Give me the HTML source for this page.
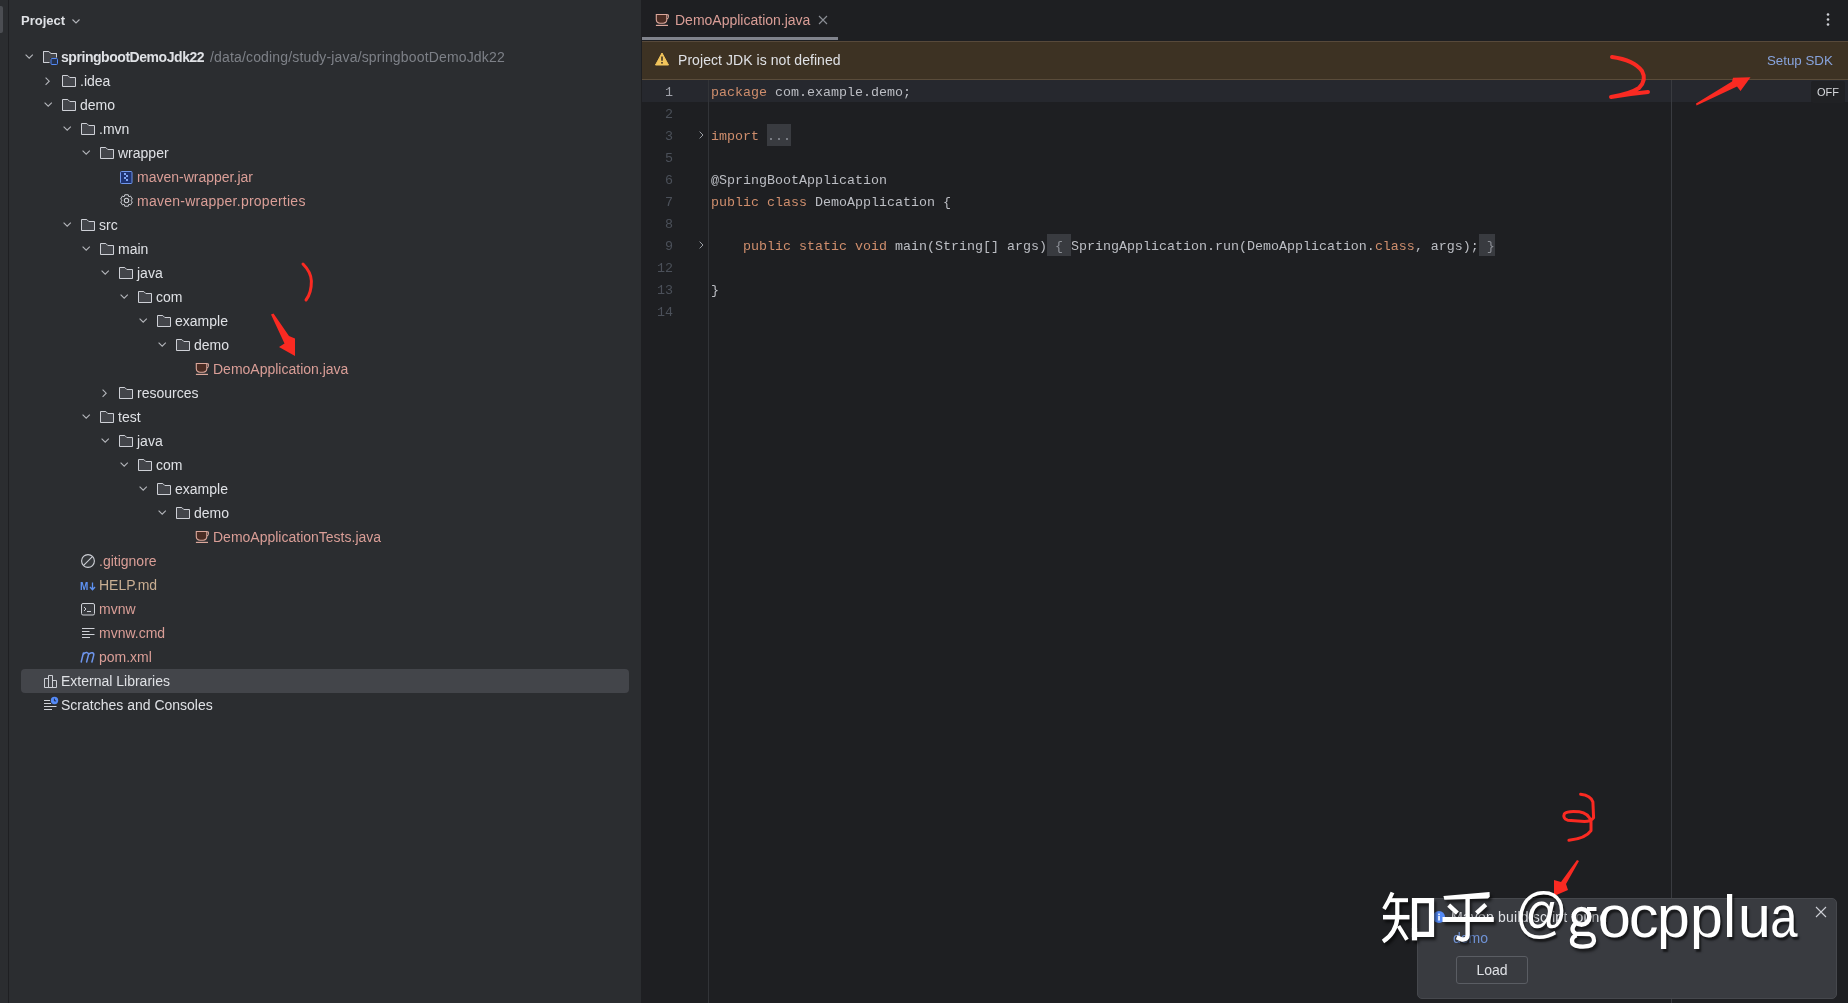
<!DOCTYPE html>
<html><head><meta charset="utf-8">
<style>
*{margin:0;padding:0;box-sizing:border-box}
html,body{width:1848px;height:1003px;overflow:hidden;background:#2b2d30}
body{position:relative;font-family:"Liberation Sans",sans-serif;font-size:14px;color:#dfe1e5;will-change:transform}
.abs{position:absolute}
svg.abs{overflow:visible}
.t{position:absolute;height:24px;line-height:24px;white-space:nowrap}
.code{position:absolute;left:711px;font-family:"Liberation Mono",monospace;font-size:13.333px;height:22px;line-height:22px;white-space:pre;color:#bcbec4}
.kw{color:#cf8e6d}
.ln{position:absolute;left:632px;width:41px;font-family:"Liberation Mono",monospace;font-size:13.333px;height:22px;line-height:22px;color:#4b5059;text-align:right}
.fb{color:#8c8f96}
.red{color:#ff2a1f}
</style></head>
<body>
<div class="abs" style="left:0;top:0;width:8px;height:1003px;background:#2b2d30"></div>
<div class="abs" style="left:0;top:6px;width:3px;height:27px;background:#4b4d52;border-radius:0 2px 2px 0"></div>
<div class="abs" style="left:8px;top:0;width:1px;height:1003px;background:#1e1f22"></div>
<div class="abs" style="left:641px;top:0;width:1px;height:1003px;background:#1e1f22"></div>
<div class="abs" style="left:642px;top:0;width:1206px;height:1003px;background:#1e1f22"></div>
<div class="abs" style="left:21px;top:12px;font-weight:bold;font-size:13px;line-height:18px;color:#dfe1e5">Project</div>
<svg class="abs" style="left:72px;top:19px" width="9" height="6"><path d="M0.5 0.5 L4 4 L7.5 0.5" fill="none" stroke="#b4b6bb" stroke-width="1.1"/></svg>

<div class="abs" style="left:21px;top:669px;width:608px;height:24px;background:#43454a;border-radius:4px"></div>
<svg class="abs" style="left:25px;top:54px" width="9" height="6"><path d="M0.6 0.6 L4.2 4.2 L7.8 0.6" fill="none" stroke="#b4b6bb" stroke-width="1.1"/></svg>
<svg class="abs" style="left:43px;top:51px" width="16" height="14"><path d="M0.5 0.5 H5.8 L7.8 2.5 H13.5 V6 M6 11.5 H0.5 V0.5" fill="#43454a" stroke="#ced0d6" stroke-width="1" stroke-linejoin="round"/><path d="M0.5 0.5 H5.8 L7.8 2.5 H13.5 V7 H7 V11.5 H0.5 Z" fill="#43454a"/><path d="M0.5 0.5 H5.8 L7.8 2.5 H13.5 V6.5 M6.5 11.5 H0.5 V0.5" fill="none" stroke="#ced0d6" stroke-width="1" stroke-linejoin="round"/><rect x="8" y="7.5" width="6.5" height="6" rx="1" fill="#25324d" stroke="#548af7" stroke-width="1"/></svg>
<div class="t" style="left:61px;top:45px;font-weight:bold;letter-spacing:-0.45px;color:#dfe1e5">springbootDemoJdk22</div>
<div class="t" style="left:210px;top:45px;color:#7d8087;letter-spacing:0.16px">/data/coding/study-java/springbootDemoJdk22</div>
<svg class="abs" style="left:45px;top:77px" width="6" height="9"><path d="M0.6 0.6 L4.2 4.2 L0.6 7.8" fill="none" stroke="#b4b6bb" stroke-width="1.1"/></svg>
<svg class="abs" style="left:62px;top:75px" width="14" height="12"><path d="M0.5 0.5 H5.8 L7.8 2.5 H13.5 V11.5 H0.5 Z" fill="#43454a" stroke="#ced0d6" stroke-width="1" stroke-linejoin="round"/></svg>
<div class="t" style="left:80px;top:69px;color:#dfe1e5;letter-spacing:0">.idea</div>
<svg class="abs" style="left:44px;top:102px" width="9" height="6"><path d="M0.6 0.6 L4.2 4.2 L7.8 0.6" fill="none" stroke="#b4b6bb" stroke-width="1.1"/></svg>
<svg class="abs" style="left:62px;top:99px" width="14" height="12"><path d="M0.5 0.5 H5.8 L7.8 2.5 H13.5 V11.5 H0.5 Z" fill="#43454a" stroke="#ced0d6" stroke-width="1" stroke-linejoin="round"/></svg>
<div class="t" style="left:80px;top:93px;color:#dfe1e5;letter-spacing:0">demo</div>
<svg class="abs" style="left:63px;top:126px" width="9" height="6"><path d="M0.6 0.6 L4.2 4.2 L7.8 0.6" fill="none" stroke="#b4b6bb" stroke-width="1.1"/></svg>
<svg class="abs" style="left:81px;top:123px" width="14" height="12"><path d="M0.5 0.5 H5.8 L7.8 2.5 H13.5 V11.5 H0.5 Z" fill="#43454a" stroke="#ced0d6" stroke-width="1" stroke-linejoin="round"/></svg>
<div class="t" style="left:99px;top:117px;color:#dfe1e5;letter-spacing:0">.mvn</div>
<svg class="abs" style="left:82px;top:150px" width="9" height="6"><path d="M0.6 0.6 L4.2 4.2 L7.8 0.6" fill="none" stroke="#b4b6bb" stroke-width="1.1"/></svg>
<svg class="abs" style="left:100px;top:147px" width="14" height="12"><path d="M0.5 0.5 H5.8 L7.8 2.5 H13.5 V11.5 H0.5 Z" fill="#43454a" stroke="#ced0d6" stroke-width="1" stroke-linejoin="round"/></svg>
<div class="t" style="left:118px;top:141px;color:#dfe1e5;letter-spacing:0">wrapper</div>
<svg class="abs" style="left:120px;top:171px" width="13" height="13"><rect x="0.5" y="0.5" width="11.5" height="12" rx="1" fill="#1e3372" stroke="#6e95ec" stroke-width="1"/><rect x="4" y="2" width="2" height="2" fill="#7ea4f4"/><rect x="6" y="4" width="2" height="2" fill="#7ea4f4"/><rect x="4" y="6" width="2" height="2" fill="#7ea4f4"/><rect x="6" y="8" width="2" height="2" fill="#7ea4f4"/></svg>
<div class="t" style="left:137px;top:165px;color:#da9e97;letter-spacing:0">maven-wrapper.jar</div>
<svg class="abs" style="left:120px;top:194px" width="14" height="14"><path d="M4.75 0.76 L8.25 0.76 L8.52 2.37 L9.07 2.69 L10.59 2.11 L12.35 5.15 L11.09 6.18 L11.09 6.82 L12.35 7.85 L10.59 10.89 L9.07 10.31 L8.52 10.63 L8.25 12.24 L4.75 12.24 L4.48 10.63 L3.93 10.31 L2.41 10.89 L0.65 7.85 L1.91 6.82 L1.91 6.18 L0.65 5.15 L2.41 2.11 L3.93 2.69 L4.48 2.37 Z" fill="none" stroke="#ced0d6" stroke-width="1" stroke-linejoin="round"/><circle cx="6.5" cy="6.5" r="2.2" fill="none" stroke="#ced0d6" stroke-width="1.1"/></svg>
<div class="t" style="left:137px;top:189px;color:#da9e97;letter-spacing:0.25px">maven-wrapper.properties</div>
<svg class="abs" style="left:63px;top:222px" width="9" height="6"><path d="M0.6 0.6 L4.2 4.2 L7.8 0.6" fill="none" stroke="#b4b6bb" stroke-width="1.1"/></svg>
<svg class="abs" style="left:81px;top:219px" width="14" height="12"><path d="M0.5 0.5 H5.8 L7.8 2.5 H13.5 V11.5 H0.5 Z" fill="#43454a" stroke="#ced0d6" stroke-width="1" stroke-linejoin="round"/></svg>
<div class="t" style="left:99px;top:213px;color:#dfe1e5;letter-spacing:0">src</div>
<svg class="abs" style="left:82px;top:246px" width="9" height="6"><path d="M0.6 0.6 L4.2 4.2 L7.8 0.6" fill="none" stroke="#b4b6bb" stroke-width="1.1"/></svg>
<svg class="abs" style="left:100px;top:243px" width="14" height="12"><path d="M0.5 0.5 H5.8 L7.8 2.5 H13.5 V11.5 H0.5 Z" fill="#43454a" stroke="#ced0d6" stroke-width="1" stroke-linejoin="round"/></svg>
<div class="t" style="left:118px;top:237px;color:#dfe1e5;letter-spacing:0">main</div>
<svg class="abs" style="left:101px;top:270px" width="9" height="6"><path d="M0.6 0.6 L4.2 4.2 L7.8 0.6" fill="none" stroke="#b4b6bb" stroke-width="1.1"/></svg>
<svg class="abs" style="left:119px;top:267px" width="14" height="12"><path d="M0.5 0.5 H5.8 L7.8 2.5 H13.5 V11.5 H0.5 Z" fill="#43454a" stroke="#ced0d6" stroke-width="1" stroke-linejoin="round"/></svg>
<div class="t" style="left:137px;top:261px;color:#dfe1e5;letter-spacing:0">java</div>
<svg class="abs" style="left:120px;top:294px" width="9" height="6"><path d="M0.6 0.6 L4.2 4.2 L7.8 0.6" fill="none" stroke="#b4b6bb" stroke-width="1.1"/></svg>
<svg class="abs" style="left:138px;top:291px" width="14" height="12"><path d="M0.5 0.5 H5.8 L7.8 2.5 H13.5 V11.5 H0.5 Z" fill="#43454a" stroke="#ced0d6" stroke-width="1" stroke-linejoin="round"/></svg>
<div class="t" style="left:156px;top:285px;color:#dfe1e5;letter-spacing:0">com</div>
<svg class="abs" style="left:139px;top:318px" width="9" height="6"><path d="M0.6 0.6 L4.2 4.2 L7.8 0.6" fill="none" stroke="#b4b6bb" stroke-width="1.1"/></svg>
<svg class="abs" style="left:157px;top:315px" width="14" height="12"><path d="M0.5 0.5 H5.8 L7.8 2.5 H13.5 V11.5 H0.5 Z" fill="#43454a" stroke="#ced0d6" stroke-width="1" stroke-linejoin="round"/></svg>
<div class="t" style="left:175px;top:309px;color:#dfe1e5;letter-spacing:0">example</div>
<svg class="abs" style="left:158px;top:342px" width="9" height="6"><path d="M0.6 0.6 L4.2 4.2 L7.8 0.6" fill="none" stroke="#b4b6bb" stroke-width="1.1"/></svg>
<svg class="abs" style="left:176px;top:339px" width="14" height="12"><path d="M0.5 0.5 H5.8 L7.8 2.5 H13.5 V11.5 H0.5 Z" fill="#43454a" stroke="#ced0d6" stroke-width="1" stroke-linejoin="round"/></svg>
<div class="t" style="left:194px;top:333px;color:#dfe1e5;letter-spacing:0">demo</div>
<svg class="abs" style="left:195px;top:362px" width="15" height="14"><path d="M1.3 1.5 H11.8 V6.6 Q11.8 10.2 8.2 10.2 H4.9 Q1.3 10.2 1.3 6.6 Z" fill="#4a2c23" stroke="#dba79b" stroke-width="1.1"/><path d="M11.8 1.8 H13.4 V4.6 Q13.4 5.8 11.8 5.8" fill="none" stroke="#dba79b" stroke-width="1"/><path d="M0.9 12.4 H13" stroke="#dba79b" stroke-width="1.2"/></svg>
<div class="t" style="left:213px;top:357px;color:#da9e97;letter-spacing:0">DemoApplication.java</div>
<svg class="abs" style="left:102px;top:389px" width="6" height="9"><path d="M0.6 0.6 L4.2 4.2 L0.6 7.8" fill="none" stroke="#b4b6bb" stroke-width="1.1"/></svg>
<svg class="abs" style="left:119px;top:387px" width="14" height="12"><path d="M0.5 0.5 H5.8 L7.8 2.5 H13.5 V11.5 H0.5 Z" fill="#43454a" stroke="#ced0d6" stroke-width="1" stroke-linejoin="round"/></svg>
<div class="t" style="left:137px;top:381px;color:#dfe1e5;letter-spacing:0">resources</div>
<svg class="abs" style="left:82px;top:414px" width="9" height="6"><path d="M0.6 0.6 L4.2 4.2 L7.8 0.6" fill="none" stroke="#b4b6bb" stroke-width="1.1"/></svg>
<svg class="abs" style="left:100px;top:411px" width="14" height="12"><path d="M0.5 0.5 H5.8 L7.8 2.5 H13.5 V11.5 H0.5 Z" fill="#43454a" stroke="#ced0d6" stroke-width="1" stroke-linejoin="round"/></svg>
<div class="t" style="left:118px;top:405px;color:#dfe1e5;letter-spacing:0">test</div>
<svg class="abs" style="left:101px;top:438px" width="9" height="6"><path d="M0.6 0.6 L4.2 4.2 L7.8 0.6" fill="none" stroke="#b4b6bb" stroke-width="1.1"/></svg>
<svg class="abs" style="left:119px;top:435px" width="14" height="12"><path d="M0.5 0.5 H5.8 L7.8 2.5 H13.5 V11.5 H0.5 Z" fill="#43454a" stroke="#ced0d6" stroke-width="1" stroke-linejoin="round"/></svg>
<div class="t" style="left:137px;top:429px;color:#dfe1e5;letter-spacing:0">java</div>
<svg class="abs" style="left:120px;top:462px" width="9" height="6"><path d="M0.6 0.6 L4.2 4.2 L7.8 0.6" fill="none" stroke="#b4b6bb" stroke-width="1.1"/></svg>
<svg class="abs" style="left:138px;top:459px" width="14" height="12"><path d="M0.5 0.5 H5.8 L7.8 2.5 H13.5 V11.5 H0.5 Z" fill="#43454a" stroke="#ced0d6" stroke-width="1" stroke-linejoin="round"/></svg>
<div class="t" style="left:156px;top:453px;color:#dfe1e5;letter-spacing:0">com</div>
<svg class="abs" style="left:139px;top:486px" width="9" height="6"><path d="M0.6 0.6 L4.2 4.2 L7.8 0.6" fill="none" stroke="#b4b6bb" stroke-width="1.1"/></svg>
<svg class="abs" style="left:157px;top:483px" width="14" height="12"><path d="M0.5 0.5 H5.8 L7.8 2.5 H13.5 V11.5 H0.5 Z" fill="#43454a" stroke="#ced0d6" stroke-width="1" stroke-linejoin="round"/></svg>
<div class="t" style="left:175px;top:477px;color:#dfe1e5;letter-spacing:0">example</div>
<svg class="abs" style="left:158px;top:510px" width="9" height="6"><path d="M0.6 0.6 L4.2 4.2 L7.8 0.6" fill="none" stroke="#b4b6bb" stroke-width="1.1"/></svg>
<svg class="abs" style="left:176px;top:507px" width="14" height="12"><path d="M0.5 0.5 H5.8 L7.8 2.5 H13.5 V11.5 H0.5 Z" fill="#43454a" stroke="#ced0d6" stroke-width="1" stroke-linejoin="round"/></svg>
<div class="t" style="left:194px;top:501px;color:#dfe1e5;letter-spacing:0">demo</div>
<svg class="abs" style="left:195px;top:530px" width="15" height="14"><path d="M1.3 1.5 H11.8 V6.6 Q11.8 10.2 8.2 10.2 H4.9 Q1.3 10.2 1.3 6.6 Z" fill="#4a2c23" stroke="#dba79b" stroke-width="1.1"/><path d="M11.8 1.8 H13.4 V4.6 Q13.4 5.8 11.8 5.8" fill="none" stroke="#dba79b" stroke-width="1"/><path d="M0.9 12.4 H13" stroke="#dba79b" stroke-width="1.2"/></svg>
<div class="t" style="left:213px;top:525px;color:#da9e97;letter-spacing:0">DemoApplicationTests.java</div>
<svg class="abs" style="left:81px;top:554px" width="15" height="15"><circle cx="7" cy="7" r="6.4" fill="#43454a" fill-opacity="0.4" stroke="#ced0d6" stroke-width="1.1"/><path d="M2.6 11.4 L11.4 2.6" stroke="#ced0d6" stroke-width="1.1"/></svg>
<div class="t" style="left:99px;top:549px;color:#da9e97;letter-spacing:0">.gitignore</div>
<svg class="abs" style="left:80px;top:582px" width="17" height="9"><text x="0" y="8" font-family="Liberation Sans" font-weight="bold" font-size="10" fill="#5e92f3">M</text><path d="M12.5 0.5 V7.5 M10 5 L12.5 7.8 L15 5" fill="none" stroke="#5e92f3" stroke-width="1.3"/></svg>
<div class="t" style="left:99px;top:573px;color:#c9ae92;letter-spacing:0">HELP.md</div>
<svg class="abs" style="left:81px;top:603px" width="15" height="13"><rect x="0.5" y="0.5" width="13" height="11.5" rx="1.5" fill="#43454a" fill-opacity="0.5" stroke="#ced0d6" stroke-width="1"/><path d="M3 4 L5 6 L3 8" fill="none" stroke="#ced0d6" stroke-width="1"/><path d="M6 8.5 H10" stroke="#ced0d6" stroke-width="1"/></svg>
<div class="t" style="left:99px;top:597px;color:#da9e97;letter-spacing:0">mvnw</div>
<svg class="abs" style="left:82px;top:627px" width="13" height="12"><path d="M0 1.5 H12.5 M0 4.5 H7.5 M0 7.5 H12.5 M0 10.5 H8" stroke="#ced0d6" stroke-width="1"/></svg>
<div class="t" style="left:99px;top:621px;color:#da9e97;letter-spacing:0">mvnw.cmd</div>
<svg class="abs" style="left:80px;top:651px" width="16" height="12"><path d="M1.2 11 L3.4 2 M3.1 3.4 Q5 1.2 7 1.6 Q9 2.2 8.3 4.5 L6.6 11 M8.5 3.6 Q10.4 1.3 12.4 1.7 Q14.3 2.3 13.6 4.6 L11.9 11" fill="none" stroke="#6e95ec" stroke-width="1.5" stroke-linecap="round" stroke-linejoin="round"/></svg>
<div class="t" style="left:99px;top:645px;color:#da9e97;letter-spacing:0">pom.xml</div>
<svg class="abs" style="left:44px;top:675px" width="14" height="13"><path d="M0.5 3.5 H4.5 V12.5 H0.5 Z M4.5 0.5 H8.5 V12.5 H4.5 Z M8.5 5.5 H12.5 V12.5 H8.5 Z" fill="#43454a" fill-opacity="0.4" stroke="#ced0d6" stroke-width="1" stroke-linejoin="round"/></svg>
<div class="t" style="left:61px;top:669px;color:#dfe1e5;letter-spacing:0">External Libraries</div>
<svg class="abs" style="left:44px;top:698px" width="16" height="14"><path d="M0 2.5 H6 M0 5.5 H7 M0 8.5 H12.5 M0 11.5 H8" stroke="#ced0d6" stroke-width="1"/><circle cx="10.5" cy="2.5" r="3.7" fill="#548af7"/><path d="M10.4 0.6 V2.9 H12.1" fill="none" stroke="#1e2a4a" stroke-width="1"/></svg>
<div class="t" style="left:61px;top:693px;color:#dfe1e5;letter-spacing:0">Scratches and Consoles</div>

<svg class="abs" style="left:655px;top:13px" width="14" height="14"><path d="M1.3 1.5 H11.8 V6.6 Q11.8 10.2 8.2 10.2 H4.9 Q1.3 10.2 1.3 6.6 Z" fill="#4a2c23" stroke="#dba79b" stroke-width="1.1"/><path d="M11.8 1.8 H13.4 V4.6 Q13.4 5.8 11.8 5.8" fill="none" stroke="#dba79b" stroke-width="1"/><path d="M0.9 12.4 H13" stroke="#dba79b" stroke-width="1.2"/></svg>
<div class="abs" style="left:675px;top:11px;line-height:18px;color:#da9e97">DemoApplication.java</div>
<svg class="abs" style="left:818px;top:15px" width="10" height="10"><path d="M1 1 L9 9 M9 1 L1 9" stroke="#8c8f96" stroke-width="1.1"/></svg>
<div class="abs" style="left:642px;top:37px;width:196px;height:3px;background:#80838c"></div>
<svg class="abs" style="left:1825px;top:12px" width="6" height="16"><circle cx="3" cy="2.5" r="1.3" fill="#ced0d6"/><circle cx="3" cy="7.5" r="1.3" fill="#ced0d6"/><circle cx="3" cy="12.5" r="1.3" fill="#ced0d6"/></svg>
<div class="abs" style="left:642px;top:41px;width:1206px;height:39px;background:#3d3223;border-top:1px solid #57493a;border-bottom:1px solid #5a4c3a"></div>
<svg class="abs" style="left:655px;top:52px" width="15" height="15"><path d="M7 1 L13.5 13 H0.5 Z" fill="#f2c55c" stroke="#f2c55c" stroke-width="1" stroke-linejoin="round"/><path d="M7 4.5 V8.8" stroke="#3d3223" stroke-width="1.6"/><rect x="6.2" y="10" width="1.6" height="1.6" fill="#3d3223"/></svg>
<div class="abs" style="left:678px;top:51px;line-height:18px;letter-spacing:0.06px;color:#dfe1e5">Project JDK is not defined</div>
<div class="abs" style="left:1767px;top:52px;line-height:18px;font-size:13.3px;color:#87a3dc">Setup SDK</div>
<div class="abs" style="left:642px;top:80px;width:1206px;height:22px;background:#26282e"></div>
<div class="abs" style="left:708px;top:80px;width:1px;height:923px;background:#323438"></div>
<div class="abs" style="left:1671px;top:80px;width:1px;height:923px;background:#393b40"></div>
<div class="abs" style="left:1811px;top:81px;width:34px;height:22px;background:#202124;border-radius:2px;font-size:11px;line-height:23px;text-align:center;color:#d6d8dc">OFF</div>

<div class="abs" style="left:767px;top:124px;width:24px;height:22px;background:#393b40"></div>
<div class="abs" style="left:1047px;top:234px;width:24px;height:22px;background:#393b40"></div>
<div class="abs" style="left:1479px;top:234px;width:16px;height:22px;background:#393b40"></div>
<div class="ln" style="top:82px;color:#a1a3ab">1</div>
<div class="code" style="top:82px"><span class="kw">package</span> com.example.demo;</div>
<div class="ln" style="top:104px;color:#4b5059">2</div>
<div class="ln" style="top:126px;color:#4b5059">3</div>
<div class="code" style="top:126px"><span class="kw">import</span> <span class="fb">...</span></div>
<div class="ln" style="top:148px;color:#4b5059">5</div>
<div class="ln" style="top:170px;color:#4b5059">6</div>
<div class="code" style="top:170px">@SpringBootApplication</div>
<div class="ln" style="top:192px;color:#4b5059">7</div>
<div class="code" style="top:192px"><span class="kw">public class</span> DemoApplication {</div>
<div class="ln" style="top:214px;color:#4b5059">8</div>
<div class="ln" style="top:236px;color:#4b5059">9</div>
<div class="code" style="top:236px">    <span class="kw">public static void</span> main(String[] args)<span class="fb"> { </span>SpringApplication.run(DemoApplication.<span class="kw">class</span>, args);<span class="fb"> }</span></div>
<div class="ln" style="top:258px;color:#4b5059">12</div>
<div class="ln" style="top:280px;color:#4b5059">13</div>
<div class="code" style="top:280px">}</div>
<div class="ln" style="top:302px;color:#4b5059">14</div>
<svg class="abs" style="left:699px;top:131px" width="6" height="9"><path d="M0.6 0.6 L4 4 L0.6 7.4" fill="none" stroke="#9a9da3" stroke-width="1"/></svg>
<svg class="abs" style="left:699px;top:241px" width="6" height="9"><path d="M0.6 0.6 L4 4 L0.6 7.4" fill="none" stroke="#9a9da3" stroke-width="1"/></svg>

<div class="abs" style="left:1417px;top:898px;width:420px;height:101px;background:#393b40;border:1px solid #46484d;border-radius:5px"></div>
<svg class="abs" style="left:1433px;top:911px" width="13" height="13"><circle cx="6" cy="6" r="6" fill="#548af7"/><rect x="5.2" y="5" width="1.6" height="4.5" fill="#fff"/><rect x="5.2" y="2.6" width="1.6" height="1.6" fill="#fff"/></svg>
<div class="abs" style="left:1451px;top:908px;line-height:18px;font-size:14px;letter-spacing:0.2px;color:#dfe1e5">Maven build script found</div>
<div class="abs" style="left:1453px;top:929px;line-height:18px;color:#7093d6">demo</div>
<div class="abs" style="left:1456px;top:956px;width:72px;height:28px;border:1px solid #5a5d63;border-radius:3px;text-align:center;line-height:26px;color:#dfe1e5">Load</div>
<svg class="abs" style="left:1815px;top:906px" width="12" height="12"><path d="M1 1 L11 11 M11 1 L1 11" stroke="#ced0d6" stroke-width="1.1"/></svg>


<svg class="abs" style="left:0;top:0" width="1848" height="1003">
<g fill="none" stroke="#fa2a22" stroke-linecap="round" stroke-linejoin="round">
<path d="M303 264 Q311 272 311.4 281 Q311.5 293 306 300" stroke-width="3"/>
<path d="M1612 57 Q1634 60 1642 71 Q1647 80 1639 88 Q1630 94 1611 97 Q1628 94 1648 92" stroke-width="4"/>
<path d="M1580.6 794.3 Q1591 795.6 1592.9 802 L1593.6 817.6 Q1591 821.5 1584.5 821.5 L1567.6 820.2 Q1562.4 818.3 1564.4 813.7 Q1567.6 810.5 1579.3 811.8 Q1588.4 813 1591 821.5 L1591 830.6 Q1585.8 838.4 1568.9 840.3" stroke-width="3"/>
</g>
<g fill="#fa2a22">
<path d="M271 314.5 L273.5 313.5 L289 336 L295 338.5 L295 356 L279 347 L284.5 343.5 Z"/>
<path d="M1696.5 105.5 L1696 103.5 L1732 81.5 L1733 77.8 L1750.5 77.3 L1740.5 91 L1737 86.5 Z"/>
<path d="M1577 860 L1579 861 L1566 884 L1568 890 L1554 896 L1554 880 L1561 882 Z"/>
</g>
</svg>

<div class="abs" style="left:1515px;top:877px;font-size:56px;line-height:70px;color:#fff;transform:scaleX(0.93);transform-origin:0 0;text-shadow:2px 3px 2px rgba(0,0,0,0.6)">@</div>
<div class="abs" style="left:1598px;top:882px;font-size:59px;line-height:70px;color:#fff;text-shadow:2px 3px 2px rgba(0,0,0,0.6)">o</div>
<div class="abs" style="left:1629px;top:882px;font-size:59px;line-height:70px;color:#fff;text-shadow:2px 3px 2px rgba(0,0,0,0.6)">c</div>
<div class="abs" style="left:1657px;top:882px;font-size:59px;line-height:70px;color:#fff;text-shadow:2px 3px 2px rgba(0,0,0,0.6)">p</div>
<div class="abs" style="left:1690px;top:882px;font-size:59px;line-height:70px;color:#fff;text-shadow:2px 3px 2px rgba(0,0,0,0.6)">p</div>
<div class="abs" style="left:1723px;top:882px;font-size:59px;line-height:70px;color:#fff;text-shadow:2px 3px 2px rgba(0,0,0,0.6)">l</div>
<div class="abs" style="left:1738px;top:882px;font-size:59px;line-height:70px;color:#fff;text-shadow:2px 3px 2px rgba(0,0,0,0.6)">u</div>
<div class="abs" style="left:1770px;top:882px;font-size:59px;line-height:70px;color:#fff;text-shadow:2px 3px 2px rgba(0,0,0,0.6);transform:scaleX(0.83);transform-origin:2px 0">a</div>

<svg class="abs" style="left:0;top:0;filter:drop-shadow(2px 3px 1.5px rgba(0,0,0,0.6))" width="1848" height="1003">
<g fill="none" stroke="#fff" stroke-linecap="butt" stroke-linejoin="miter">
<path d="M1392.5 892.5 Q1389 901 1384 909" stroke-width="4"/>
<path d="M1389 900.2 H1408" stroke-width="4"/>
<path d="M1383 917.2 H1409.5" stroke-width="4.5"/>
<path d="M1397.3 900 V918 Q1396 933 1383 941.6" stroke-width="4.2"/>
<path d="M1398.5 926 L1407 939.8" stroke-width="4"/>
<path d="M1414.5 900.6 H1431.5 V934.3 H1414.5 Z" stroke-width="5.2"/>
<path d="M1414.5 928 V940.4" stroke-width="5.2"/>

<path d="M1448.7 905.2 L1457.4 913.2" stroke-width="4.3"/>
<path d="M1485.8 904.6 L1476.5 913.2" stroke-width="4.3"/>
<path d="M1442.5 919.5 H1493.8" stroke-width="5"/>
<path d="M1467.6 898.4 V935 Q1467.6 940 1462 939.5 L1456.7 937.3" stroke-width="4.4"/>
</g>
<path d="M1443.4 895.9 L1489.5 891.9 L1489.8 896.8 L1488 898.4 L1444.4 899.8 Z" fill="#fff"/>
<g fill="none" stroke="#fff">
<ellipse cx="1581.5" cy="916.8" rx="7.9" ry="7.8" stroke-width="4.6"/>
<path d="M1587 909 H1596.5" stroke-width="4"/>
<path d="M1575.5 923.5 Q1569.5 929.5 1575.5 933.6 L1589 934 Q1594 934.8 1594 940.8 Q1593.5 946.6 1583 946.6 Q1572 946.6 1572 941 Q1572 937 1576.5 935.2" stroke-width="4.3"/>
</g>
</svg>

</body></html>
